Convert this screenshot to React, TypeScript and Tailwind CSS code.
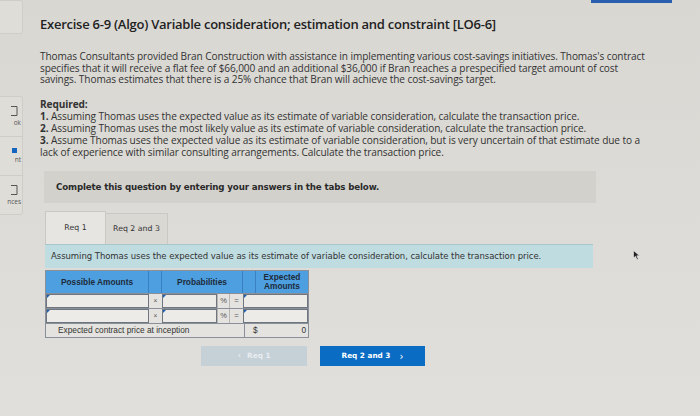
import React from 'react';

const sidebarItems = [
  { label: 'ok', icon: 'book' },
  { label: 'nt', icon: 'print' },
  { label: 'nces', icon: 'refs' },
];

const SideIcon: React.FC<{ kind: string }> = ({ kind }) => {
  if (kind === 'print') {
    return <div className="w-[5px] h-[5px] bg-[#1565c0] ml-auto mr-[4px]" />;
  }
  return (
    <svg width="8" height="10" viewBox="0 0 8 10" className="ml-auto mr-[3px]">
      <path d="M1 0.5 H7 V9.5 H1" fill="none" stroke="#555" strokeWidth="1" />
    </svg>
  );
};

const InputCell: React.FC<{ className?: string }> = ({ className = '' }) => (
  <div className={`relative h-[14px] bg-[#ecebe8] border border-[#6f7680] ${className}`}>
    <div className="absolute left-0 top-0 w-0 h-0 border-t-[3px] border-r-[3px] border-t-[#1d5fb0] border-r-transparent" />
  </div>
);

export default function App() {
  return (
    <div className="w-[700px] h-[416px] overflow-hidden bg-gradient-to-b from-[#d9d7d2] to-[#e1dfdb] relative font-['Open_Sans',sans-serif] text-[#2b2b2b]">
      {/* top right tab */}
      <div className="absolute top-0 left-[591px] w-[81px] h-[3px] bg-[#2a5fb0]" />
      {/* cursor */}
      <svg className="absolute left-[633px] top-[250px]" width="7" height="10" viewBox="0 0 7 10">
        <path d="M0.5 0.5 L0.5 8 L2.5 6.3 L4 9.5 L5.3 8.9 L3.8 5.8 L6.5 5.8 Z" fill="#222" stroke="#eee" strokeWidth="0.6" />
      </svg>

      <div className="flex">
        {/* Sidebar */}
        <div className="w-[23px] shrink-0">
          <div className="h-[34px] border border-l-0 border-[#cfcdc8] rounded-r-[3px] bg-[#dfddd8]" />
          <div className="mt-[62px] border border-l-0 border-[#cfcdc8] rounded-r-[3px] bg-[#dfddd8]">
            {sidebarItems.map((item, i) => (
              <div
                key={item.label}
                className={`h-[39px] flex flex-col justify-center items-end pr-[1px] ${i > 0 ? 'border-t border-[#cfcdc8]' : ''}`}
              >
                <SideIcon kind={item.icon} />
                <span className="text-[6.5px] leading-[8px] text-[#555] mt-[3px]">{item.label}</span>
              </div>
            ))}
          </div>
        </div>

        {/* Main */}
        <div className="pl-[17px] pt-[15px] w-[640px]">
          <h1 className="font-semibold text-[13px] leading-[18px] text-[#222] tracking-[-0.25px]">
            Exercise 6-9 (Algo) Variable consideration; estimation and constraint [LO6-6]
          </h1>

          <p className="mt-[18px] w-[608px] text-[10.1px] leading-[11.7px] text-[#333] tracking-[-0.1px]">
            Thomas Consultants provided Bran Construction with assistance in implementing various cost-savings initiatives. Thomas's contract specifies that it will receive a flat fee of $66,000 and an additional $36,000 if Bran reaches a prespecified target amount of cost savings. Thomas estimates that there is a 25% chance that Bran will achieve the cost-savings target.
          </p>

          <div className="mt-[12px] w-[608px] text-[10.1px] leading-[12px] text-[#333] tracking-[-0.1px]">
            <div className="font-bold">Required:</div>
            <div><span className="font-bold">1.</span> Assuming Thomas uses the expected value as its estimate of variable consideration, calculate the transaction price.</div>
            <div><span className="font-bold">2.</span> Assuming Thomas uses the most likely value as its estimate of variable consideration, calculate the transaction price.</div>
            <div><span className="font-bold">3.</span> Assume Thomas uses the expected value as its estimate of variable consideration, but is very uncertain of that estimate due to a lack of experience with similar consulting arrangements. Calculate the transaction price.</div>
          </div>

          <div className="mt-[13px] ml-[4px] w-[552px] h-[32px] bg-[#d2d1cc] flex items-center pl-[12px]">
            <span className="font-['DejaVu_Sans',sans-serif] font-bold text-[8.7px] text-[#2a2a2a] tracking-[-0.15px]">
              Complete this question by entering your answers in the tabs below.
            </span>
          </div>

          {/* Tabs */}
          <div className="mt-[8px] ml-[5px] flex items-end font-['DejaVu_Sans',sans-serif] text-[7.8px] text-[#333]">
            <div className="w-[61px] h-[33px] bg-[#e6e5e1] border border-b-0 border-[#c9c8c3] flex items-center justify-center">Req 1</div>
            <div className="w-[62px] h-[31px] bg-[#d9d8d3] border border-l-0 border-b-0 border-[#c9c8c3] flex items-center justify-center">Req 2 and 3</div>
          </div>

          <div className="ml-[5px] w-[548px] h-[24px] bg-[#bfdce1] border-t border-[#a9c6cc] flex items-center pl-[6px]">
            <span className="font-['DejaVu_Sans',sans-serif] text-[8.5px] text-[#333] tracking-[-0.05px]">
              Assuming Thomas uses the expected value as its estimate of variable consideration, calculate the transaction price.
            </span>
          </div>

          {/* Table */}
          <div className="ml-[5px] mt-[2px] w-[264px] font-['Liberation_Sans',sans-serif] border border-[#8a9099] bg-[#e4e3df]">
            <div className="flex h-[22px] bg-[#4d9fe0] text-[8.3px] font-bold text-[#1d2a3a] leading-[9px]">
              <div className="w-[103px] flex items-center justify-center border-r border-[#3a80c0]">Possible Amounts</div>
              <div className="w-[13px] border-r border-[#3a80c0]" />
              <div className="w-[81px] flex items-center justify-center border-r border-[#3a80c0]">Probabilities</div>
              <div className="w-[13px] border-r border-[#3a80c0]" />
              <div className="flex-1 flex items-center justify-center text-center">Expected<br />Amounts</div>
            </div>
            {[0, 1].map((r) => (
              <div key={r} className="flex h-[15px] items-center border-t border-[#8a9099] text-[6.5px] text-[#555]">
                <InputCell className="w-[103px]" />
                <div className="w-[13px] text-center">×</div>
                <InputCell className="w-[55px]" />
                <div className="w-[13px] text-center text-[7.5px] border-x border-[#b7b6b2] h-full flex items-center justify-center">%</div>
                <div className="w-[13px] text-center text-[7.5px] h-full flex items-center justify-center">=</div>
                <InputCell className="flex-1" />
              </div>
            ))}
            <div className="flex h-[14px] items-center border-t border-[#8a9099] text-[8.3px] text-[#333]">
              <div className="w-[197px] pl-[12px] whitespace-nowrap">Expected contract price at inception</div>
              <div className="w-[1px]" />
              <div className="flex-1 h-full border-l border-[#8a9099] flex items-center justify-between pl-[8px] pr-[2px]">
                <span>$</span>
                <span>0</span>
              </div>
            </div>
          </div>

          {/* Nav buttons */}
          <div className="mt-[8px] ml-[161px] flex gap-[13px] font-['DejaVu_Sans',sans-serif] text-[7.3px] font-bold">
            <div className="w-[106px] h-[20px] bg-[#c6d0d7] text-[#e8eef2] flex items-center justify-center gap-[6px]">
              <span className="font-normal text-[9px]">‹</span> Req 1
            </div>
            <div className="w-[105px] h-[20px] bg-[#0b6cc4] text-white flex items-center justify-center gap-[9px]">
              Req 2 and 3 <span className="text-[10px] font-normal">›</span>
            </div>
          </div>
        </div>
      </div>
    </div>
  );
}
